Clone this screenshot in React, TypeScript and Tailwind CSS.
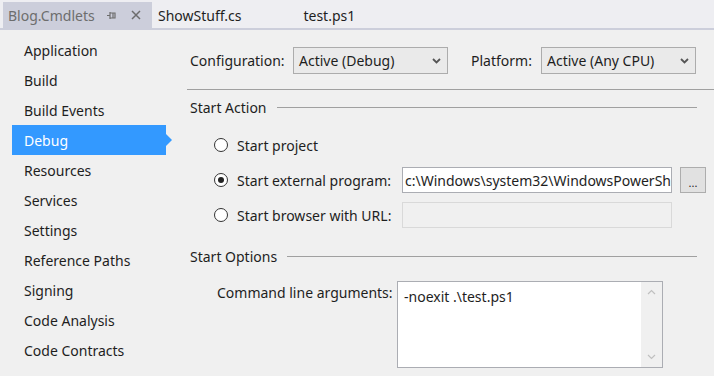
import React from "react";

const navItems = [
  "Application",
  "Build",
  "Build Events",
  "Debug",
  "Resources",
  "Services",
  "Settings",
  "Reference Paths",
  "Signing",
  "Code Analysis",
  "Code Contracts",
];

function Chevron({ up = false, color = "#444", w = 1.2 }: { up?: boolean; color?: string; w?: number }) {
  return (
    <svg width="9" height="6" viewBox="0 0 9 6">
      <path
        d={up ? "M1 5 L4.5 1.5 L8 5" : "M1 1 L4.5 4.5 L8 1"}
        fill="none"
        stroke={color}
        strokeWidth={w}
      />
    </svg>
  );
}

function Select({ value }: { value: string }) {
  return (
    <div className="flex h-[27px] w-[155px] shrink-0 items-center justify-between border border-[#ACACAC] bg-[#EAEAEA] pl-[5px] pr-[6px]">
      <span>{value}</span>
      <Chevron color="#555" w={1.8} />
    </div>
  );
}

function Radio({ checked }: { checked?: boolean }) {
  return (
    <div className="flex h-[14px] w-[14px] shrink-0 items-center justify-center rounded-full border border-[#333] bg-white">
      {checked && <div className="h-[6px] w-[6px] rounded-full bg-[#222]" />}
    </div>
  );
}

function SectionHeader({ label }: { label: string }) {
  return (
    <div className="flex items-center pl-[10px] pr-[17px]">
      <span>{label}</span>
      <div className="ml-[10px] h-px flex-1 bg-[#A0A0A0]" />
    </div>
  );
}

export default function App() {
  return (
    <div
      className="h-[376px] w-[714px] overflow-hidden whitespace-nowrap bg-[#F0F0F0] text-[14px] text-[#1E1E1E]"
      style={{ fontFamily: "'Segoe UI', 'Noto Sans', sans-serif" }}
    >
      {/* Tab bar */}
      <div className="flex h-[30px] items-end border-b-2 border-[#CCCEDB] bg-[#EEEEF2]">
        <div className="ml-[3px] flex h-[26px] w-[149px] items-center bg-[#CCCEDB] pl-[5px] text-[#6D6D6D]">
          <span className="w-[98px]">Blog.Cmdlets</span>
          <svg width="11" height="11" viewBox="0 0 11 11">
            <path d="M1 5.5 H4 M4 2 V9 M4 3 H9 V8 H4 M7 3 V8" fill="none" stroke="#6D6D6D" strokeWidth="1.2" />
          </svg>
          <svg className="ml-[14px]" width="10" height="10" viewBox="0 0 10 10">
            <path d="M1 1 L9 9 M9 1 L1 9" stroke="#6D6D6D" strokeWidth="1.5" />
          </svg>
        </div>
        <div className="flex h-[26px] items-center pl-[6px]">ShowStuff.cs</div>
        <div className="flex h-[26px] items-center pl-[62px]">test.ps1</div>
      </div>

      <div className="flex">
        {/* Sidebar */}
        <div className="w-[180px] shrink-0 pt-[5px]">
          {navItems.map((item) =>
            item === "Debug" ? (
              <div key={item} className="relative ml-[12px] flex h-[30px] w-[154px] items-center bg-[#3399FF] pl-[12px] text-white">
                {item}
                <div className="absolute right-[-6px] top-[9px] h-0 w-0 border-y-[6px] border-l-[6px] border-y-transparent border-l-[#3399FF]" />
              </div>
            ) : (
              <div key={item} className="flex h-[30px] items-center pl-[24px]">
                {item}
              </div>
            )
          )}
        </div>

        {/* Main pane */}
        <div className="min-w-0 flex-1">
          <div className="flex items-center pl-[10px] pt-[17px]">
            <span className="w-[103px] shrink-0">Configuration:</span>
            <Select value="Active (Debug)" />
            <span className="ml-[23px] w-[70px] shrink-0">Platform:</span>
            <Select value="Active (Any CPU)" />
          </div>

          <div className="ml-[7px] mt-[15px] h-px bg-[#A0A0A0]" />

          <div className="mt-[7px]">
            <SectionHeader label="Start Action" />
          </div>

          <div className="mt-[17px] flex h-[20px] items-center pl-[34px]">
            <Radio />
            <span className="ml-[9px]">Start project</span>
          </div>

          <div className="mt-[12px] flex items-center pl-[34px]">
            <Radio checked />
            <span className="ml-[9px] w-[165px] shrink-0">Start external program:</span>
            <div className="flex h-[26px] w-[270px] shrink-0 items-center overflow-hidden border border-[#ABADB3] bg-white pl-[2px]">
              <span className="block w-[266px] overflow-hidden">c:\Windows\system32\WindowsPowerShell\v1.0\powershell.exe</span>
            </div>
            <div className="ml-[8px] flex h-[26px] w-[26px] shrink-0 items-end justify-center border border-[#ADADAD] bg-[#E1E1E1] pb-[4px] text-[11px] leading-none">
              ...
            </div>
          </div>

          <div className="mt-[9px] flex items-center pl-[34px]">
            <Radio />
            <span className="ml-[9px] w-[165px] shrink-0">Start browser with URL:</span>
            <div className="h-[26px] w-[270px] shrink-0 border border-[#D9D9D9] bg-[#F0F0F0]" />
          </div>

          <div className="mt-[18px]">
            <SectionHeader label="Start Options" />
          </div>

          <div className="mt-[14px] flex items-start pl-[37px]">
            <span className="w-[180px] shrink-0 pt-[1px]">Command line arguments:</span>
            <div className="flex h-[87px] w-[266px] shrink-0 border border-[#ABADB3] bg-white">
              <div className="flex-1 pl-[6px] pt-[4px]">-noexit .\test.ps1</div>
              <div className="flex w-[21px] flex-col items-center justify-between bg-[#F0F0F0] py-[7px]">
                <Chevron up color="#C0C0C0" />
                <Chevron color="#C0C0C0" />
              </div>
            </div>
          </div>
        </div>
      </div>
    </div>
  );
}
